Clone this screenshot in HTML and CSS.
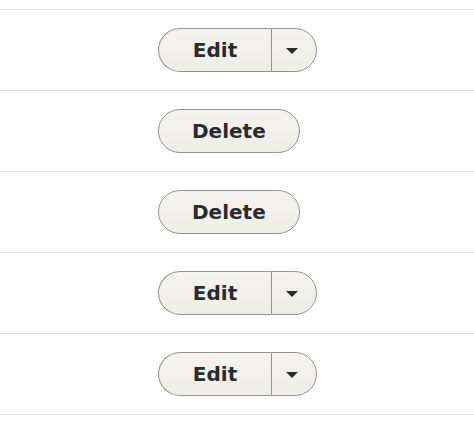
FILE: index.html
```html
<!DOCTYPE html>
<html lang="en">
<head>
<meta charset="utf-8">
<title>Operations</title>
<link rel="stylesheet" href="styles.css">
</head>
<body>
<div class="table">
  <div class="row row-top"></div>
  <div class="row">
    <div class="dropbutton">
      <button class="btn btn-main" type="button">Edit</button>
      <button class="btn-toggle" type="button" aria-label="List additional actions"><span class="caret"></span></button>
    </div>
  </div>
  <div class="row">
    <button class="btn btn-single" type="button">Delete</button>
  </div>
  <div class="row">
    <button class="btn btn-single" type="button">Delete</button>
  </div>
  <div class="row">
    <div class="dropbutton">
      <button class="btn btn-main" type="button">Edit</button>
      <button class="btn-toggle" type="button" aria-label="List additional actions"><span class="caret"></span></button>
    </div>
  </div>
  <div class="row">
    <div class="dropbutton">
      <button class="btn btn-main" type="button">Edit</button>
      <button class="btn-toggle" type="button" aria-label="List additional actions"><span class="caret"></span></button>
    </div>
  </div>
</div>
</body>
</html>
```

FILE: styles.css
```css
html, body {
  margin: 0;
  padding: 0;
  background: #ffffff;
}

body {
  font-family: "DejaVu Sans", "Liberation Sans", sans-serif;
  color: #232429;
}

.table {
  display: flex;
  flex-direction: column;
}

.row {
  display: flex;
  align-items: center;
  box-sizing: border-box;
  height: 81px;
  padding-left: 158px;
  border-bottom: 1px solid #e3e2de;
}

.row-top {
  height: 10px;
}

.btn,
.btn-toggle {
  box-sizing: border-box;
  height: 44px;
  margin: 0;
  font-family: inherit;
  font-size: 20px;
  font-weight: 700;
  color: #2a2b2e;
  background: linear-gradient(#f4f3ef, #eeede7);
  cursor: pointer;
}

.btn-single {
  padding: 0 33px;
  border: 1.5px solid #939391;
  border-radius: 22px;
}

.dropbutton {
  display: flex;
  align-items: stretch;
  height: 44px;
}

.btn-main {
  width: 113px;
  padding: 0;
  border: 1.5px solid #939391;
  border-right: none;
  border-radius: 22px 0 0 22px;
}

.btn-toggle {
  width: 46px;
  padding: 0 4px 0 0;
  display: flex;
  align-items: center;
  justify-content: center;
  border: 1.5px solid #939391;
  border-left: 1px solid #939391;
  border-radius: 0 22px 22px 0;
}

.caret {
  width: 0;
  height: 0;
  border-left: 6px solid transparent;
  border-right: 6px solid transparent;
  border-top: 6px solid #2a2b2e;
  margin-top: 2px;
}
```
